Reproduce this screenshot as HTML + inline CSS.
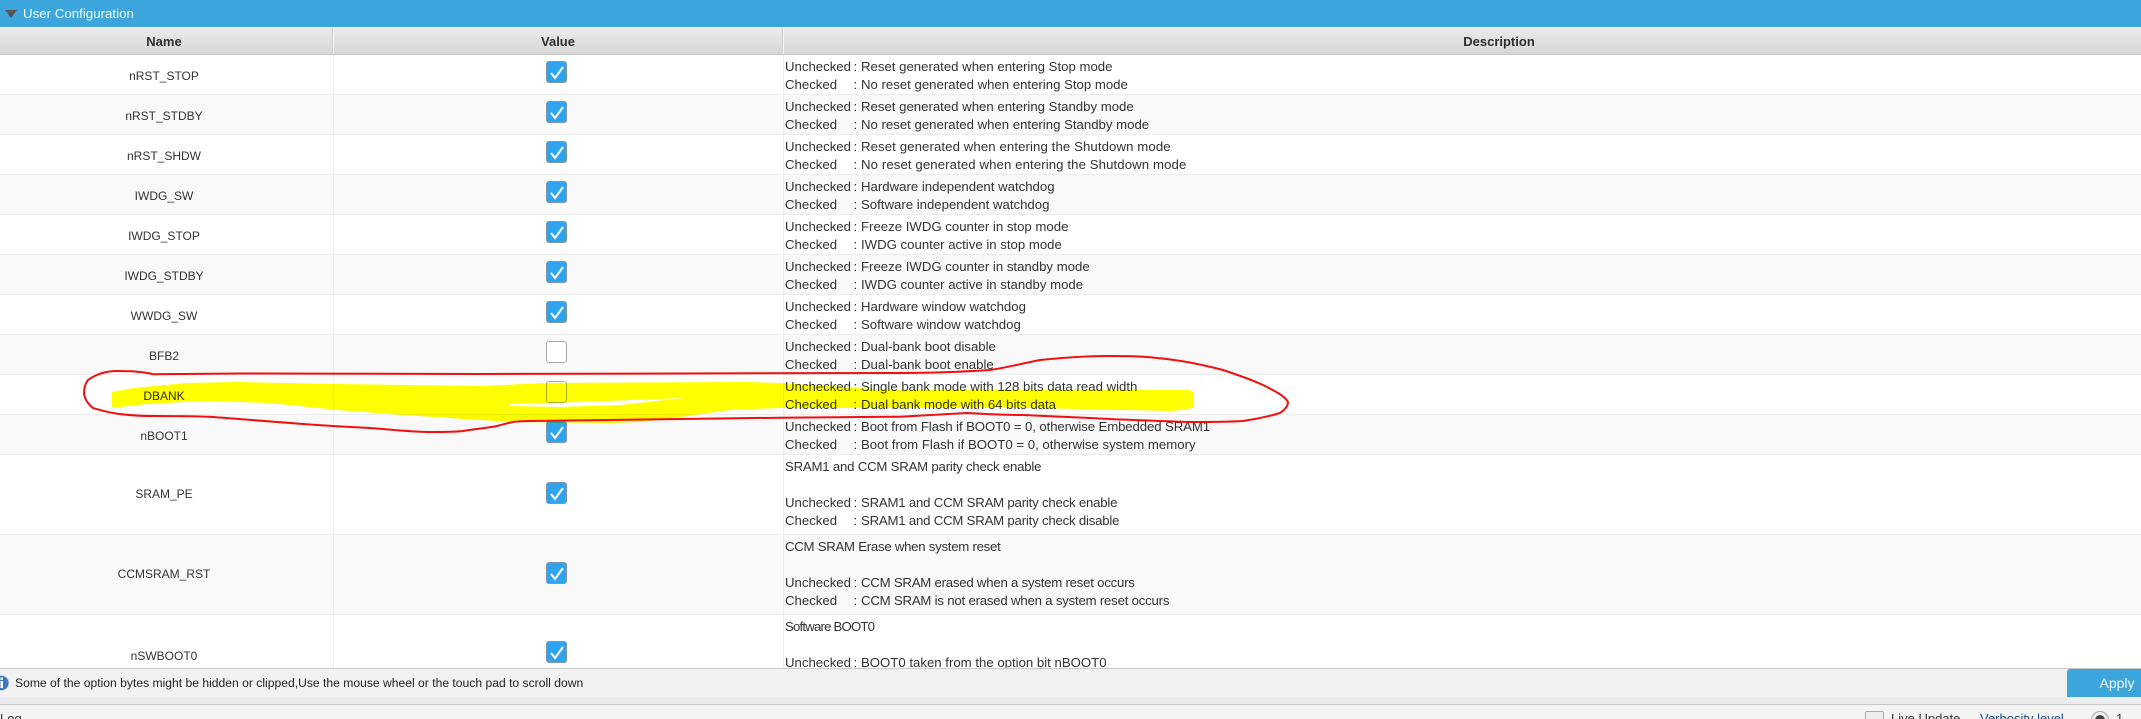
<!DOCTYPE html>
<html><head><meta charset="utf-8"><style>
html,body{margin:0;padding:0;width:2141px;height:719px;overflow:hidden;background:#fff;font-family:"Liberation Sans",sans-serif;color:#333}
#a{position:absolute;left:0;top:0;width:2141px;height:719px;overflow:hidden}
.top{position:absolute;left:0;top:0;width:2141px;height:27px;background:#3ca6dc}
.tt{position:absolute;left:23px;top:5px;font-size:13.3px;line-height:18px;color:#eef7fc}
.tri{position:absolute;left:5px;top:10px;width:0;height:0;border-left:6px solid transparent;border-right:6px solid transparent;border-top:8px solid #555}
.hd{position:absolute;left:0;top:28px;width:2141px;height:26px;background:linear-gradient(#ebebeb,#d7d7d7);border-bottom:1px solid #c9c9c9}
.hl{position:absolute;top:0;height:26px;width:1px;background:#f4f4f4;border-left:1px solid #d0d0d0}
.ht{position:absolute;top:5px;font-size:13px;font-weight:bold;line-height:18px;transform:translateX(-50%);white-space:nowrap;color:#2e2e2e}
.r{position:absolute;left:0;width:2141px;background:#fff;border-bottom:1px solid #ececec;overflow:hidden}
.r.o{background:#f9f9f9}
.n{position:absolute;left:164px;top:12px;transform:translateX(-50%);font-size:12px;line-height:18px;white-space:nowrap}
.cb{position:absolute;left:546px;top:6px;width:21px;height:22px;box-sizing:border-box;border-radius:3px;background:#2ea4f0;border:1px solid #7f97a8}
.cb svg{position:absolute;left:2px;top:2px;width:15px;height:16px}
.cb.u{background:#fff;border:1.5px solid #aaa}
.d{position:absolute;left:785px;top:3px;font-size:13.2px;line-height:18px;white-space:nowrap}
.d b{font-weight:normal;display:inline-block;width:68.5px}
.d i{font-style:normal;display:inline-block;width:7.5px}
.v{position:absolute;top:0;width:1px;height:614px;background:#eee}
.bar{position:absolute;left:0;top:668px;width:2141px;height:28px;background:#f2f2f2;border-top:1px solid #c8c8c8;border-bottom:1px solid #c8c8c8}
.msg{position:absolute;left:15px;top:5px;font-size:12.13px;line-height:18px;white-space:nowrap;color:#222}
.apply{position:absolute;left:2067px;top:0;width:74px;height:28px;background:#3ca6dc;border-radius:3px 0 0 0;color:#eef7fc;font-size:14px;line-height:28px;text-align:center;padding-left:26px;box-sizing:border-box}
.gap{position:absolute;left:0;top:697px;width:2141px;height:7px;background:#ececec}
.log{position:absolute;left:0;top:704px;width:2141px;height:15px;background:#f4f4f4;border-top:1px solid #c8c8c8;overflow:hidden;box-sizing:border-box}
.lt{position:absolute;top:6px;font-size:13px;line-height:16px;white-space:nowrap;color:#333}
</style></head><body><div id="a">
<div class="top"><div class="tri"></div><div class="tt">User Configuration</div></div>
<div class="hd"><div class="hl" style="left:332px"></div><div class="hl" style="left:782px"></div>
<div class="ht" style="left:164px">Name</div><div class="ht" style="left:558px">Value</div><div class="ht" style="left:1499px">Description</div></div>

<div class="r" style="top:55px;height:39px"><div class="n">nRST_STOP</div><div class="cb"><svg viewBox="0 0 15 16"><path d="M2 9l4 5 8-11" fill="none" stroke="#fff" stroke-width="2"/></svg></div><div class="d"><b>Unchecked</b><i>:</i>Reset generated when entering Stop mode<br><b>Checked</b><i>:</i>No reset generated when entering Stop mode</div></div>
<div class="r o" style="top:95px;height:39px"><div class="n">nRST_STDBY</div><div class="cb"><svg viewBox="0 0 15 16"><path d="M2 9l4 5 8-11" fill="none" stroke="#fff" stroke-width="2"/></svg></div><div class="d"><b>Unchecked</b><i>:</i>Reset generated when entering Standby mode<br><b>Checked</b><i>:</i>No reset generated when entering Standby mode</div></div>
<div class="r" style="top:135px;height:39px"><div class="n">nRST_SHDW</div><div class="cb"><svg viewBox="0 0 15 16"><path d="M2 9l4 5 8-11" fill="none" stroke="#fff" stroke-width="2"/></svg></div><div class="d"><b>Unchecked</b><i>:</i><span style="letter-spacing:.1px">Reset generated when entering the Shutdown mode</span><br><b>Checked</b><i>:</i><span style="letter-spacing:.1px">No reset generated when entering the Shutdown mode</span></div></div>
<div class="r o" style="top:175px;height:39px"><div class="n">IWDG_SW</div><div class="cb"><svg viewBox="0 0 15 16"><path d="M2 9l4 5 8-11" fill="none" stroke="#fff" stroke-width="2"/></svg></div><div class="d"><b>Unchecked</b><i>:</i>Hardware independent watchdog<br><b>Checked</b><i>:</i>Software independent watchdog</div></div>
<div class="r" style="top:215px;height:39px"><div class="n">IWDG_STOP</div><div class="cb"><svg viewBox="0 0 15 16"><path d="M2 9l4 5 8-11" fill="none" stroke="#fff" stroke-width="2"/></svg></div><div class="d"><b>Unchecked</b><i>:</i>Freeze IWDG counter in stop mode<br><b>Checked</b><i>:</i>IWDG counter active in stop mode</div></div>
<div class="r o" style="top:255px;height:39px"><div class="n">IWDG_STDBY</div><div class="cb"><svg viewBox="0 0 15 16"><path d="M2 9l4 5 8-11" fill="none" stroke="#fff" stroke-width="2"/></svg></div><div class="d"><b>Unchecked</b><i>:</i>Freeze IWDG counter in standby mode<br><b>Checked</b><i>:</i>IWDG counter active in standby mode</div></div>
<div class="r" style="top:295px;height:39px"><div class="n">WWDG_SW</div><div class="cb"><svg viewBox="0 0 15 16"><path d="M2 9l4 5 8-11" fill="none" stroke="#fff" stroke-width="2"/></svg></div><div class="d"><b>Unchecked</b><i>:</i>Hardware window watchdog<br><b>Checked</b><i>:</i>Software window watchdog</div></div>
<div class="r o" style="top:335px;height:39px"><div class="n">BFB2</div><div class="cb u"></div><div class="d"><b>Unchecked</b><i>:</i>Dual-bank boot disable<br><b>Checked</b><i>:</i>Dual-bank boot enable</div></div>
<div class="r" style="top:375px;height:39px"><div class="n">DBANK</div><div class="cb u"></div><div class="d"><b>Unchecked</b><i>:</i>Single bank mode with 128 bits data read width<br><b>Checked</b><i>:</i>Dual bank mode with 64 bits data</div></div>
<div class="r o" style="top:415px;height:39px"><div class="n">nBOOT1</div><div class="cb"><svg viewBox="0 0 15 16"><path d="M2 9l4 5 8-11" fill="none" stroke="#fff" stroke-width="2"/></svg></div><div class="d"><b>Unchecked</b><i>:</i><span style="letter-spacing:-.1px">Boot from Flash if BOOT0 = 0, otherwise Embedded SRAM1</span><br><b>Checked</b><i>:</i>Boot from Flash if BOOT0 = 0, otherwise system memory</div></div>
<div class="r" style="top:455px;height:79px"><div class="n" style="top:30px">SRAM_PE</div><div class="cb" style="top:27px"><svg viewBox="0 0 15 16"><path d="M2 9l4 5 8-11" fill="none" stroke="#fff" stroke-width="2"/></svg></div><div class="d"><span style="letter-spacing:-.2px">SRAM1 and CCM SRAM parity check enable</span><br><br><b>Unchecked</b><i>:</i><span style="letter-spacing:-.2px">SRAM1 and CCM SRAM parity check enable</span><br><b>Checked</b><i>:</i><span style="letter-spacing:-.2px">SRAM1 and CCM SRAM parity check disable</span></div></div>
<div class="r o" style="top:535px;height:79px"><div class="n" style="top:30px">CCMSRAM_RST</div><div class="cb" style="top:27px"><svg viewBox="0 0 15 16"><path d="M2 9l4 5 8-11" fill="none" stroke="#fff" stroke-width="2"/></svg></div><div class="d"><span style="letter-spacing:-.25px">CCM SRAM Erase when system reset</span><br><br><b>Unchecked</b><i>:</i><span style="letter-spacing:-.22px">CCM SRAM erased when a system reset occurs</span><br><b>Checked</b><i>:</i><span style="letter-spacing:-.2px">CCM SRAM is not erased when a system reset occurs</span></div></div>
<div class="r" style="top:615px;height:53px;border-bottom:0"><div class="n" style="top:32px">nSWBOOT0</div><div class="cb" style="top:26px"><svg viewBox="0 0 15 16"><path d="M2 9l4 5 8-11" fill="none" stroke="#fff" stroke-width="2"/></svg></div><div class="d"><span style="letter-spacing:-.8px">Software BOOT0</span><br><br><b>Unchecked</b><i>:</i>BOOT0 taken from the option bit nBOOT0</div></div>

<div class="v" style="left:333px;top:55px"></div>
<div class="v" style="left:783px;top:55px"></div>

<div class="bar">
<svg style="position:absolute;left:0;top:5px" width="12" height="18" viewBox="0 0 12 18"><circle cx="1.5" cy="9" r="7.5" fill="#3d78b5" stroke="#c8d8e8"/><rect x="0.5" y="7" width="2.5" height="7" fill="#fff"/><rect x="0.5" y="3.5" width="2.5" height="2.5" fill="#fff"/></svg>
<div class="msg">Some of the option bytes might be hidden or clipped,Use the mouse wheel or the touch pad to scroll down</div>
<div class="apply">Apply</div></div>
<div class="gap"></div>
<div class="log"><div class="lt" style="left:0">Log</div>
<div style="position:absolute;left:1865px;top:6px;width:19px;height:19px;box-sizing:border-box;border:1px solid #aaa;border-radius:2px;background:#eee"></div>
<div class="lt" style="left:1891px">Live Update</div>
<div class="lt" style="left:1980px;color:#1c4f8a">Verbosity level</div>
<div style="position:absolute;left:2091px;top:6px;width:18px;height:18px;box-sizing:border-box;border:1px solid #aaa;border-radius:50%;background:#eee"><div style="position:absolute;left:3px;top:3px;width:10px;height:10px;border-radius:50%;background:#444"></div></div>
<div class="lt" style="left:2116px">1</div></div>

<svg style="position:absolute;left:0;top:0;mix-blend-mode:multiply" width="2141" height="719"><path fill="#ffff00" fill-rule="evenodd" d="M112 392L133 388L187 383L237 382L337 384L480 386L547 383L747 382L780 383L890 390L1190 390L1193 392L1193 408L1173 411L1123 410L990 407L890 408L780 408L730 410L680 417L640 422L610 423L513 422L480 420L403 415L337 410L270 403L203 401L147 404L112 408Z M510 404L580 402L685 398L620 405L560 407L510 406Z"/></svg>
<svg style="position:absolute;left:0;top:0" width="2141" height="719"><path fill="none" stroke="#f01010" stroke-width="2" d="M153 374.3C145 372 130 371 117 371C105 371 95 375 88 380C84 385 84 392 84 394C85 399 87 403 93 408C100 410 110 413 120 414C135 416 145 416 153 416C175 416 195 416 213 417C250 420 280 422 303 424C330 426 350 427 370 428C395 430 415 432 430 432C445 432 455 432 463 431C475 429 487 428 497 426C505 424 508 423 513 422C520 421 525 421 530 421L780 417.7L900 416.7L967 413C985 414 1005 415 1023 415C1050 416 1070 417 1090 418C1125 420 1160 421 1190 422C1210 422 1228 422 1243 421C1258 419 1270 416 1280 413C1286 409 1288 405 1288 402C1285 396 1275 391 1263 385C1250 379 1235 374 1223 370C1200 364 1180 360 1157 358C1140 356 1125 356 1107 356C1085 356 1060 358 1040 360C1020 364 1005 368 990 370C960 372 925 373 890 373L480 374L240 373.5L153 374.3Z"/></svg>
</div></body></html>
